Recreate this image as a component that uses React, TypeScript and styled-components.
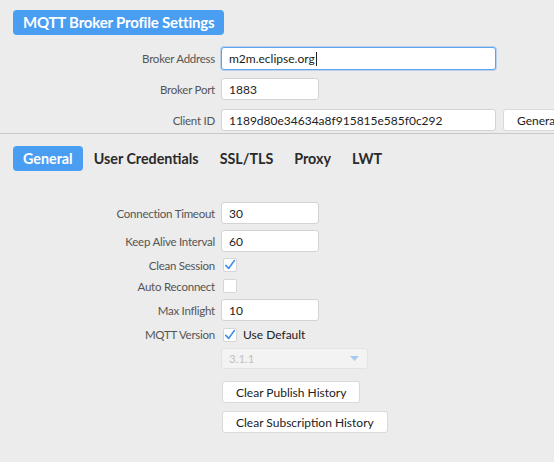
import React from "react";
import styled, { createGlobalStyle } from "styled-components";

const Global = createGlobalStyle`
  html, body { margin: 0; padding: 0; background: #ececec; overflow: hidden; }
  body { font-family: Lato, "Noto Sans", sans-serif; width: 554px; height: 462px; }
  #root { width: 554px; height: 462px; overflow: hidden; }
`;

const Page = styled.div`
  width: 554px;
  height: 462px;
  display: flex;
  flex-direction: column;
  background: #ececec;
  overflow: hidden;
`;

const Top = styled.div`
  display: flex;
  flex-direction: column;
  padding: 10px 0 0 13px;
  height: 123px;
  box-sizing: border-box;
`;

const TitleBadge = styled.div`
  align-self: flex-start;
  height: 25px;
  line-height: 25px;
  padding: 0 10px;
  background: #4a9ef2;
  color: #fff;
  font-weight: 700;
  font-size: 15px;
  letter-spacing: -0.2px;
  border-radius: 4px;
`;

const Row = styled.div<{ $top: number; $h: number }>`
  display: grid;
  grid-template-columns: 202px auto;
  column-gap: 6px;
  align-items: center;
  margin-top: ${(p) => p.$top}px;
  height: ${(p) => p.$h}px;
`;

const Label = styled.div`
  text-align: right;
  font-size: 11.5px;
  letter-spacing: -0.25px;
  color: #555;
  white-space: nowrap;
`;

const Controls = styled.div`
  display: flex;
  align-items: center;
  gap: 7px;
  white-space: nowrap;
`;

const Field = styled.div<{ $w: number; $focus?: boolean; $h?: number }>`
  box-sizing: border-box;
  width: ${(p) => p.$w}px;
  height: ${(p) => p.$h ?? 22}px;
  display: flex;
  align-items: center;
  padding: 0 7px;
  background: #fff;
  border: 1px solid ${(p) => (p.$focus ? "#5ea3ee" : "#d3d3d3")};
  box-shadow: ${(p) => (p.$focus ? "0 0 0 1px rgba(94,163,238,0.35)" : "none")};
  border-radius: 3px;
  font-size: 12px;
  color: #222;
  white-space: nowrap;
  overflow: hidden;
`;

const Caret = styled.span`
  display: inline-block;
  width: 1px;
  height: 14px;
  background: #222;
  margin-left: 1px;
`;

const Button = styled.div`
  box-sizing: border-box;
  height: 22px;
  padding: 0 13px;
  display: inline-flex;
  align-items: center;
  background: #fff;
  border: 1px solid #dadada;
  border-radius: 3px;
  font-size: 12px;
  color: #222;
  white-space: nowrap;
  flex-shrink: 0;
`;

const Divider = styled.div`
  height: 1px;
  background: #c8c8c8;
  margin-top: 10px;
`;

const Tabs = styled.div`
  display: flex;
  gap: 1px;
  padding-left: 13px;
  margin-top: 12px;
`;

const Tab = styled.div<{ $active?: boolean }>`
  height: 25px;
  line-height: 25px;
  padding: 0 10px;
  border-radius: 4px;
  font-size: 14.3px;
  font-weight: 700;
  color: ${(p) => (p.$active ? "#fff" : "#2a2a2a")};
  background: ${(p) => (p.$active ? "#4a9ef2" : "transparent")};
`;

const Body = styled.div`
  display: flex;
  flex-direction: column;
  padding-left: 13px;
`;

const Box = styled.div`
  box-sizing: border-box;
  width: 14px;
  height: 14px;
  background: #fff;
  border: 1px solid #d6d6d6;
  border-radius: 2px;
  display: flex;
  align-items: center;
  justify-content: center;
  margin-left: 2px;
`;

const CheckText = styled.span`
  font-size: 12px;
  color: #222;
  margin-left: -1px;
`;

const Select = styled.div`
  box-sizing: border-box;
  width: 147px;
  height: 21px;
  display: flex;
  align-items: center;
  justify-content: space-between;
  padding: 0 8px 0 7px;
  background: #f3f3f3;
  border: 1px solid #e3e3e3;
  border-radius: 3px;
  font-size: 11.5px;
  color: #c2c2c2;
`;

const ControlsCol = styled.div`
  display: flex;
  flex-direction: column;
  align-items: flex-start;
  padding-left: 1px;
`;

const Check = ({ on }: { on: boolean }) => (
  <Box>
    {on && (
      <svg width="12" height="12" viewBox="0 0 12 12">
        <path d="M1.8 6.4 L4.6 9.4 L10.4 1.6" fill="none" stroke="#3f8fe8" strokeWidth="1.6" strokeLinecap="round" strokeLinejoin="round" />
      </svg>
    )}
  </Box>
);

export default function App() {
  return (
    <>
      <Global />
      <Page>
        <Top>
          <TitleBadge>MQTT Broker Profile Settings</TitleBadge>
          <Row $top={12} $h={23}>
            <Label>Broker Address</Label>
            <Controls>
              <Field $w={275} $h={23} $focus>
                m2m.eclipse.org<Caret />
              </Field>
            </Controls>
          </Row>
          <Row $top={8} $h={22}>
            <Label>Broker Port</Label>
            <Controls>
              <Field $w={98}>1883</Field>
            </Controls>
          </Row>
          <Row $top={9} $h={22}>
            <Label>Client ID</Label>
            <Controls>
              <Field $w={275}>1189d80e34634a8f915815e585f0c292</Field>
              <Button>Generate</Button>
            </Controls>
          </Row>
        </Top>
        <Divider />
        <Tabs>
          <Tab $active>General</Tab>
          <Tab>User Credentials</Tab>
          <Tab>SSL/TLS</Tab>
          <Tab>Proxy</Tab>
          <Tab>LWT</Tab>
        </Tabs>
        <Body>
          <Row $top={31} $h={22}>
            <Label>Connection Timeout</Label>
            <Controls>
              <Field $w={98}>30</Field>
            </Controls>
          </Row>
          <Row $top={6} $h={22}>
            <Label>Keep Alive Interval</Label>
            <Controls>
              <Field $w={98}>60</Field>
            </Controls>
          </Row>
          <Row $top={6} $h={14}>
            <Label>Clean Session</Label>
            <Controls>
              <Check on />
            </Controls>
          </Row>
          <Row $top={7} $h={14}>
            <Label>Auto Reconnect</Label>
            <Controls>
              <Check on={false} />
            </Controls>
          </Row>
          <Row $top={6} $h={22}>
            <Label>Max Inflight</Label>
            <Controls>
              <Field $w={98}>10</Field>
            </Controls>
          </Row>
          <Row $top={6} $h={14}>
            <Label>MQTT Version</Label>
            <Controls>
              <Check on />
              <CheckText>Use Default</CheckText>
            </Controls>
          </Row>
          <Row $top={7} $h={21}>
            <span />
            <Select>
              3.1.1
              <svg width="9" height="5" viewBox="0 0 9 5">
                <path d="M0 0 L9 0 L4.5 5 Z" fill="#a9c9ee" />
              </svg>
            </Select>
          </Row>
          <Row $top={12} $h={22}>
            <span />
            <ControlsCol>
              <Button>Clear Publish History</Button>
            </ControlsCol>
          </Row>
          <Row $top={8} $h={22}>
            <span />
            <ControlsCol>
              <Button>Clear Subscription History</Button>
            </ControlsCol>
          </Row>
        </Body>
      </Page>
    </>
  );
}
